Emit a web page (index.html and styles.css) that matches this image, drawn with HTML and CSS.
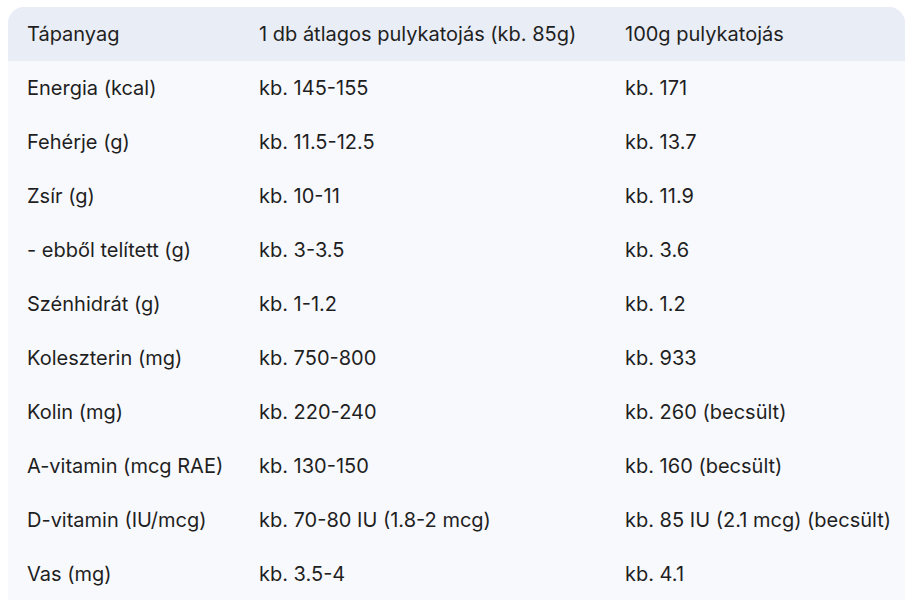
FILE: index.html
```html
<!DOCTYPE html>
<html lang="hu">
<head>
<meta charset="utf-8">
<link rel="stylesheet" href="styles.css">
</head>
<body>
<div class="wrap">
<table class="nutri">
<colgroup><col class="c1"><col class="c2"><col class="c3"></colgroup>
<thead>
<tr><th>Tápanyag</th><th>1 db átlagos pulykatojás (kb. 85g)</th><th>100g pulykatojás</th></tr>
</thead>
<tbody>
<tr><td>Energia (kcal)</td><td>kb. 145-155</td><td>kb. 171</td></tr>
<tr><td>Fehérje (g)</td><td>kb. 11.5-12.5</td><td>kb. 13.7</td></tr>
<tr><td>Zsír (g)</td><td>kb. 10-11</td><td>kb. 11.9</td></tr>
<tr><td>- ebből telített (g)</td><td>kb. 3-3.5</td><td>kb. 3.6</td></tr>
<tr><td>Szénhidrát (g)</td><td>kb. 1-1.2</td><td>kb. 1.2</td></tr>
<tr><td>Koleszterin (mg)</td><td>kb. 750-800</td><td>kb. 933</td></tr>
<tr><td>Kolin (mg)</td><td>kb. 220-240</td><td>kb. 260 (becsült)</td></tr>
<tr><td>A-vitamin (mcg RAE)</td><td>kb. 130-150</td><td>kb. 160 (becsült)</td></tr>
<tr><td>D-vitamin (IU/mcg)</td><td>kb. 70-80 IU (1.8-2 mcg)</td><td>kb. 85 IU (2.1 mcg) (becsült)</td></tr>
<tr><td>Vas (mg)</td><td>kb. 3.5-4</td><td>kb. 4.1</td></tr>
</tbody>
</table>
</div>
</body>
</html>
```
FILE: styles.css
```css
html, body { margin: 0; padding: 0; background: #ffffff; }
body { padding: 7px 9px 0 8px; font-family: Inter, Roboto, sans-serif; color: #1f1f1f; }
.wrap { border-radius: 16px 16px 0 0; overflow: hidden; background: #f8f9fd; }
.nutri { width: 100%; border-collapse: collapse; table-layout: fixed; font-size: 20px; }
.c1 { width: 232px; }
.c2 { width: 366px; }
.nutri th, .nutri td { text-align: left; font-weight: 400; padding: 0 0 0 19px; height: 54px; white-space: nowrap; vertical-align: middle; }
.nutri thead tr { background: #e9edf5; }
.nutri th { height: 54px; }
```
